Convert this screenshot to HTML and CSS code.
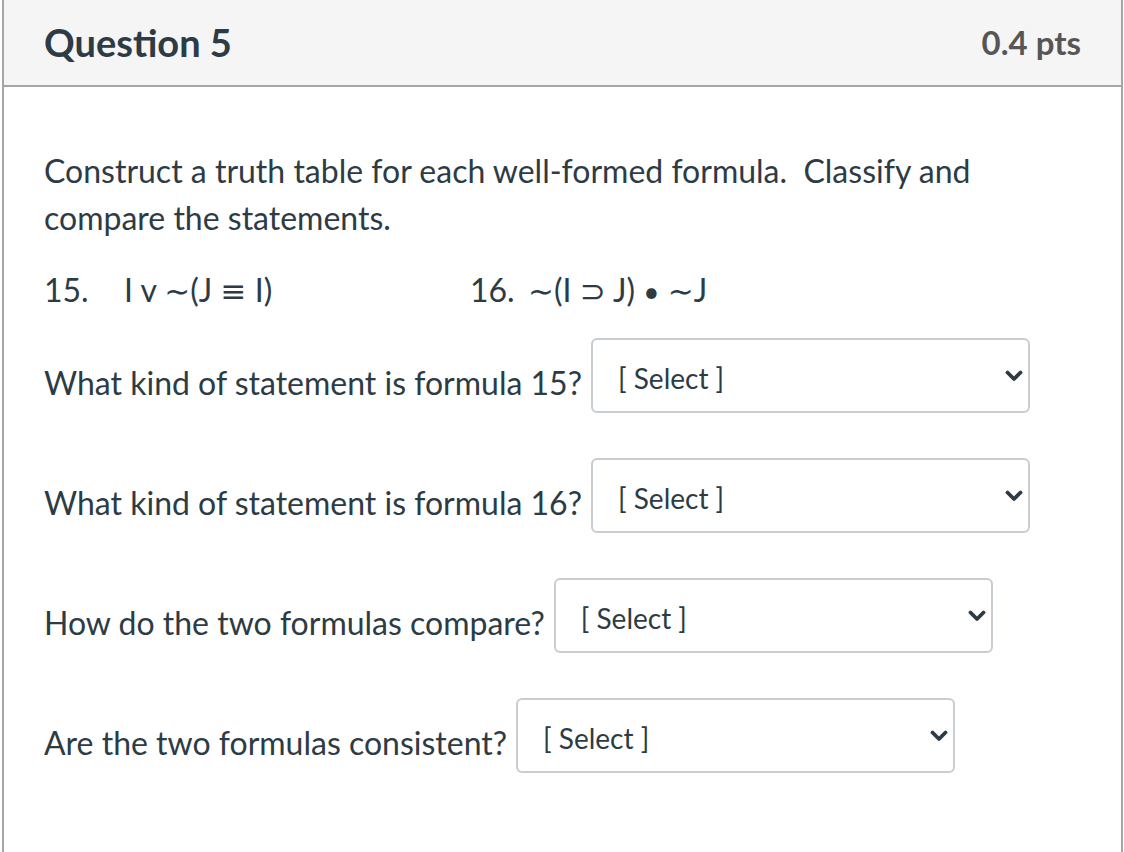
FILE: index.html
```html
<!DOCTYPE html>
<html>
<head>
<meta charset="utf-8">
<link rel="stylesheet" href="styles.css">
</head>
<body>
<div class="question">
  <div class="q-header">
    <h2 class="q-title">Question 5</h2>
    <div class="q-points">0.4 pts</div>
  </div>
  <div class="q-body">
    <p class="intro">Construct a truth table for each well-formed formula.&nbsp; Classify and compare the statements.</p>
    <div class="formulas">
      <span class="f-num">15.</span><span class="f-expr f-first">I v <span class="sym">∼</span>(J <span class="sym">≡</span> I)</span>
      <span class="f-num2">16.</span><span class="f-expr"><span class="sym">∼</span>(I <span class="sym">⊃</span> J) <span class="dot">•</span> <span class="sym">∼</span>J</span>
    </div>
    <div class="row">
      <span class="label">What kind of statement is formula 15?</span>
      <div class="select"><span>[ Select ]</span><svg class="chev" width="18" height="12" viewBox="0 0 18 12"><path d="M2.5 2.5 L9 9 L15.5 2.5" fill="none" stroke="#2d3b45" stroke-width="3.8" stroke-linecap="round" stroke-linejoin="round"/></svg></div>
    </div>
    <div class="row">
      <span class="label">What kind of statement is formula 16?</span>
      <div class="select"><span>[ Select ]</span><svg class="chev" width="18" height="12" viewBox="0 0 18 12"><path d="M2.5 2.5 L9 9 L15.5 2.5" fill="none" stroke="#2d3b45" stroke-width="3.8" stroke-linecap="round" stroke-linejoin="round"/></svg></div>
    </div>
    <div class="row">
      <span class="label">How do the two formulas compare?</span>
      <div class="select"><span>[ Select ]</span><svg class="chev" width="18" height="12" viewBox="0 0 18 12"><path d="M2.5 2.5 L9 9 L15.5 2.5" fill="none" stroke="#2d3b45" stroke-width="3.8" stroke-linecap="round" stroke-linejoin="round"/></svg></div>
    </div>
    <div class="row">
      <span class="label">Are the two formulas consistent?</span>
      <div class="select"><span>[ Select ]</span><svg class="chev" width="18" height="12" viewBox="0 0 18 12"><path d="M2.5 2.5 L9 9 L15.5 2.5" fill="none" stroke="#2d3b45" stroke-width="3.8" stroke-linecap="round" stroke-linejoin="round"/></svg></div>
    </div>
  </div>
</div>
</body>
</html>
```
FILE: styles.css
```css
html, body {
  margin: 0;
  padding: 0;
  background: #ffffff;
}
body {
  font-family: Lato, "Open Sans", sans-serif;
  color: #2d3b45;
}
.question {
  margin-left: 2px;
  width: 1121px;
  box-sizing: border-box;
  min-height: 852px;
  border-left: 2px solid #a6a6a6;
  border-right: 2px solid #a6a6a6;
}
.q-header {
  display: flex;
  justify-content: space-between;
  align-items: center;
  height: 87px;
  box-sizing: border-box;
  padding: 0 40px 2px 40px;
  background: #f5f5f5;
  border-bottom: 2px solid #a6a6a6;
}
.q-title {
  margin: 0;
  font-size: 38px;
  font-weight: 700;
  color: #2d3b45;
}
.q-points {
  font-size: 33px;
  font-weight: 700;
  color: #565656;
}
.q-body {
  padding: 60px 40px 0 40px;
  font-size: 32px;
  line-height: 47px;
}
.intro {
  margin: 0;
  width: 940px;
}
.formulas {
  display: flex;
  margin-top: 25px;
}
.f-num {
  width: 80px;
}
.f-num2 {
  width: 58px;
}
.f-first {
  width: 346px;
}
.sym {
  font-family: "DejaVu Sans", sans-serif;
  font-size: 31px;
}
.dot {
  font-size: 28px;
}
.row {
  display: flex;
  align-items: center;
  margin-top: 23px;
}
.row + .row {
  margin-top: 45px;
}
.label {
  margin-right: 9px;
  margin-top: 14px;
}
.select {
  display: flex;
  align-items: center;
  justify-content: space-between;
  width: 439px;
  height: 75px;
  box-sizing: border-box;
  border: 2px solid #c7cdd1;
  border-radius: 6px;
  padding: 6px 5px 0 25px;
  font-size: 28px;
}
.chev {
  display: block;
  margin-top: -6px;
}
```
